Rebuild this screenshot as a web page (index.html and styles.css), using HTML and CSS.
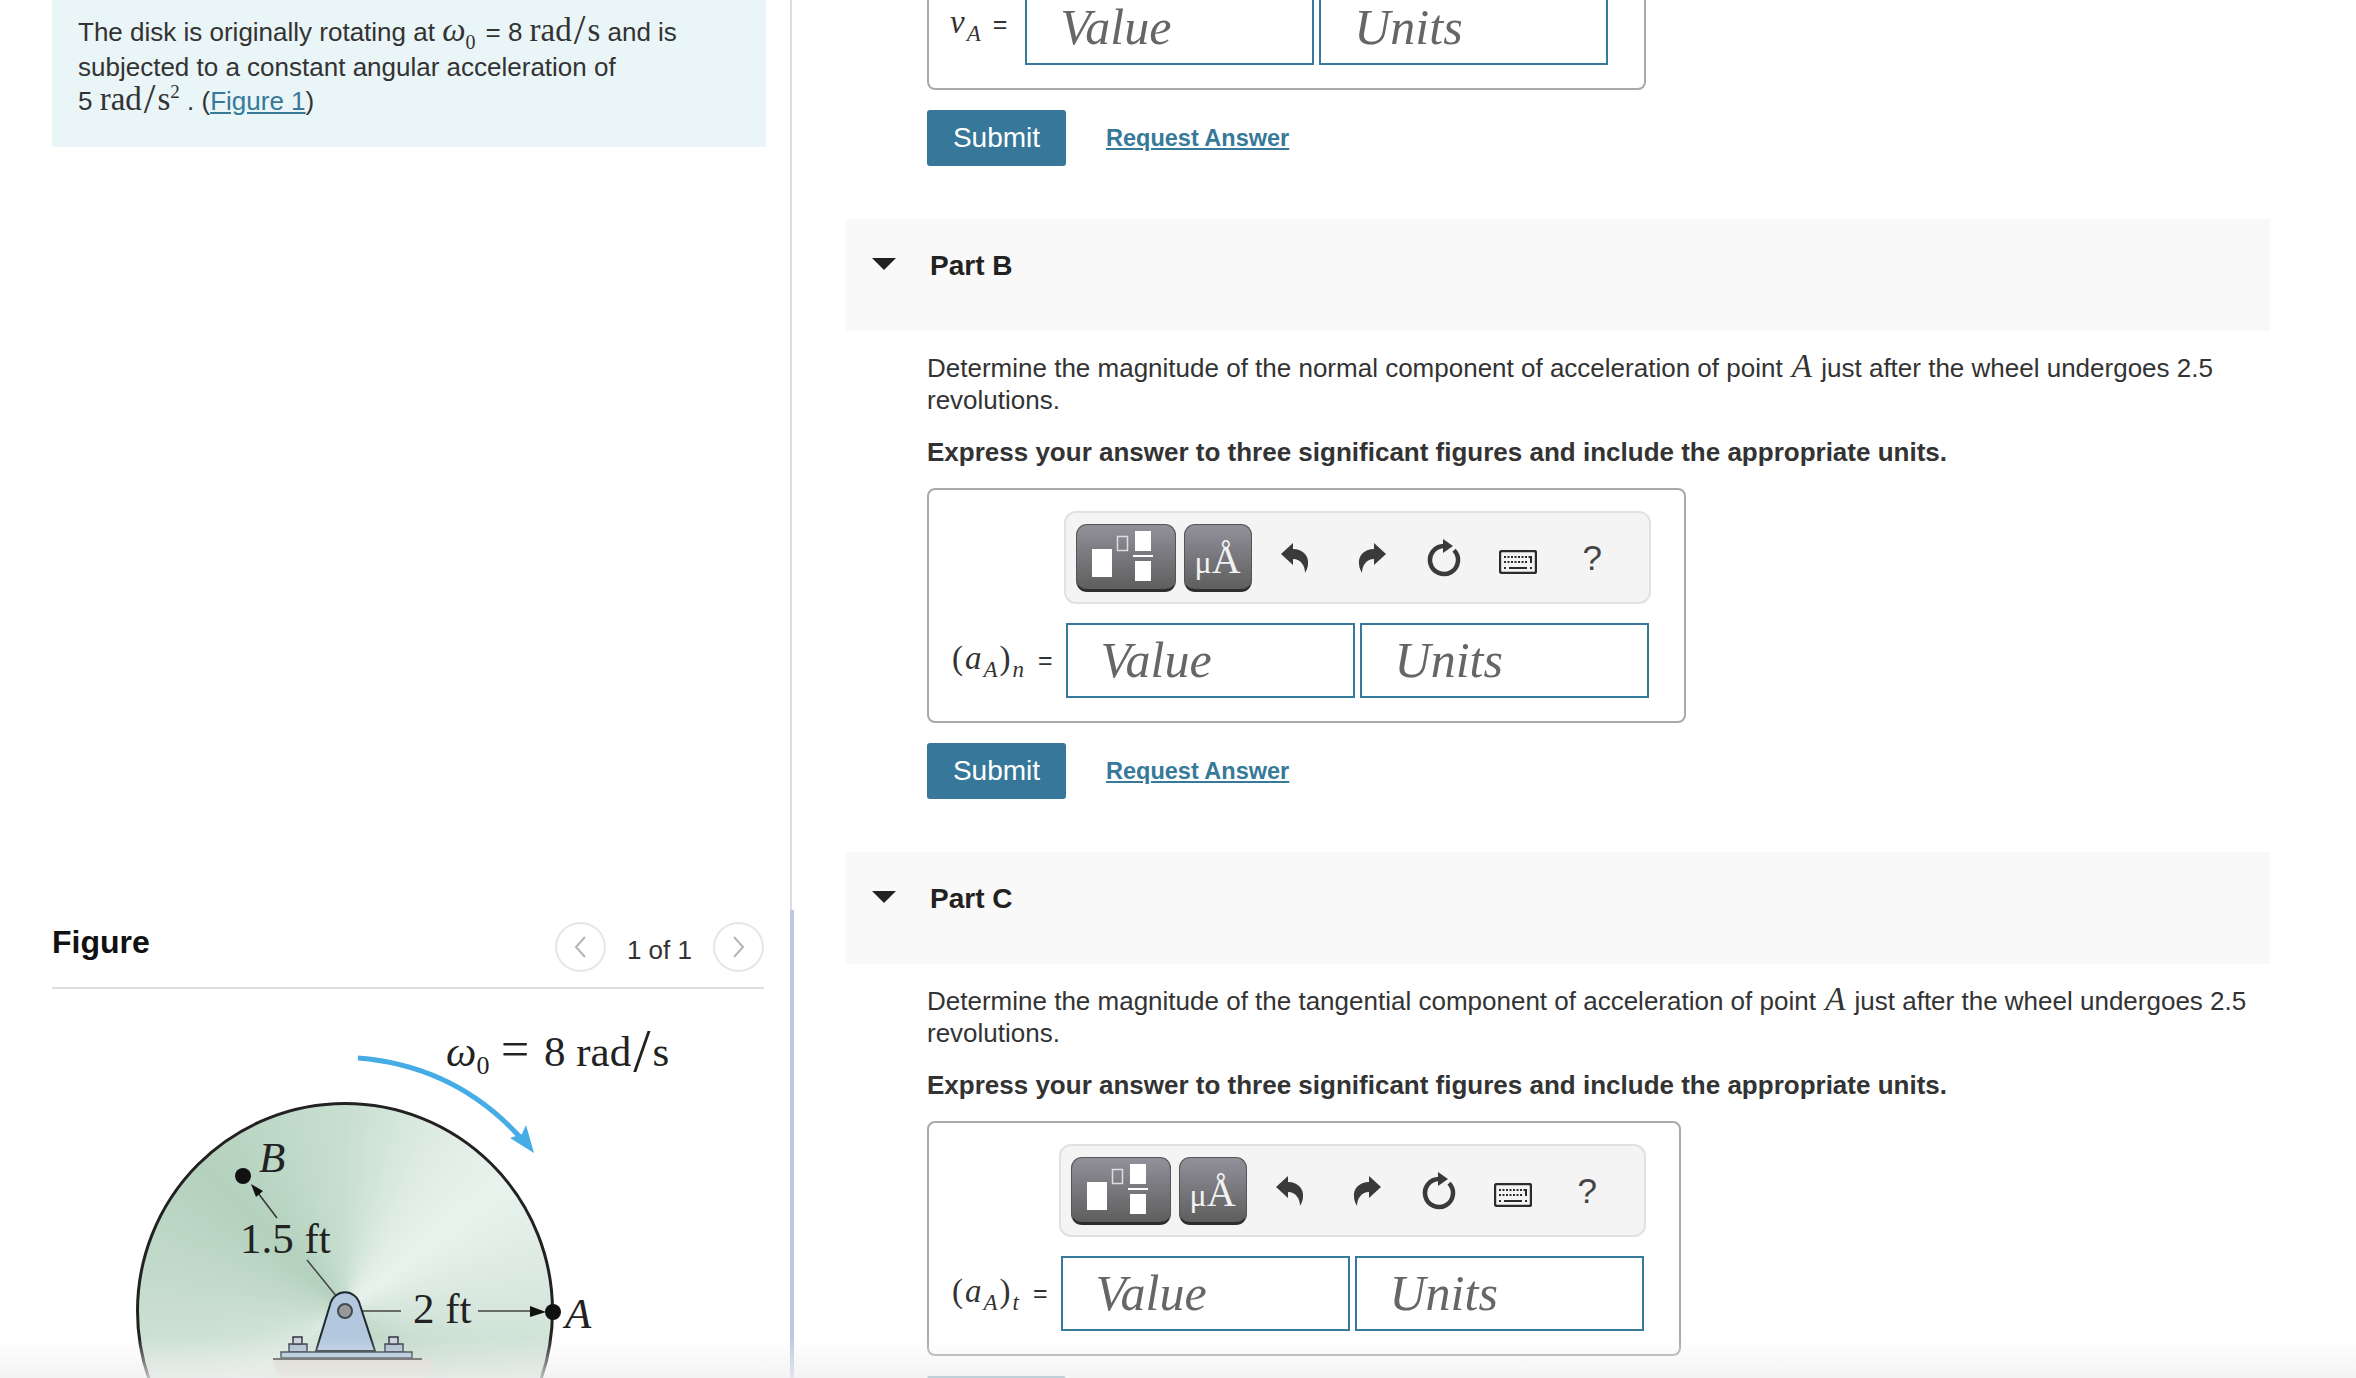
FILE: index.html
```html
<!DOCTYPE html>
<html>
<head>
    <title>Disk problem</title>
    <link rel="stylesheet" href="styles.css">
</head>
<body>
    <svg class="defs">
        <symbol id="undo" viewBox="0 0 28 30"><path d="M0 11 L12 0 V6 C22 6 28 13 27 21 C27 25 25 28 24 30 C24 23 20 16 12 16 V22 Z"/></symbol>
        <symbol id="redo" viewBox="0 0 28 30"><path d="M28 11 L16 0 V6 C6 6 0 13 1 21 C1 25 3 28 4 30 C4 23 8 16 16 16 V22 Z"/></symbol>
        <symbol id="reload" viewBox="0 0 40 40"><path d="M30 12.2 A14 14 0 1 1 20 8" fill="none" stroke="#3a3a3a" stroke-width="4.5"/><path d="M19 1 L29 8 L19 15 Z"/></symbol>
        <symbol id="keyboard" viewBox="0 0 38 24">
            <rect x="1" y="1" width="36" height="22" rx="2" fill="none" stroke="#2b2b2b" stroke-width="2.4"/>
            <path d="M5 7 H33 M5 12 H29 M5 18 H7 M31 18 H33" stroke="#2b2b2b" stroke-width="2" stroke-dasharray="2 1.5" fill="none"/>
            <path d="M10 18 H28 M32 6 V13" stroke="#2b2b2b" stroke-width="2"/>
        </symbol>
        <symbol id="templates" viewBox="0 0 100 68">
            <rect x="16" y="26" width="20" height="28" fill="#fff"/>
            <rect x="41.5" y="13.5" width="10" height="14" fill="none" stroke="#ddd" stroke-width="1.5"/>
            <rect x="59" y="8" width="16" height="20" fill="#fff"/>
            <rect x="57" y="32" width="20" height="2" fill="#fff"/>
            <rect x="59" y="38" width="16" height="20" fill="#fff"/>
        </symbol>
    </svg>

    <div class="page">
        <div class="left">
            <div class="intro">
                The disk is originally rotating at <span class="math"><i>ω</i><sub>0</sub></span><span class="eq">=</span> 8 <span class="math">rad<span class="slash">/</span>s</span> and is<br>
                subjected to a constant angular acceleration of<br>
                5 <span class="math">rad<span class="slash">/</span>s<sup>2</sup></span> . (<a href="#">Figure 1</a>)
            </div>

            <div class="figure-head">
                <h2>Figure</h2>
                <div class="pager">
                    <span class="round"><svg width="14" height="24" viewBox="0 0 14 24"><path d="M12 2 L3 12 L12 22" fill="none" stroke="#b4b4b4" stroke-width="2"/></svg></span>
                    <span class="count">1 of 1</span>
                    <span class="round"><svg width="14" height="24" viewBox="0 0 14 24"><path d="M2 2 L11 12 L2 22" fill="none" stroke="#b4b4b4" stroke-width="2"/></svg></span>
                </div>
            </div>

            <div class="figure">
                <div class="disk"></div>
                <svg class="drawing" viewBox="52 989 712 389" width="712" height="389">
                    <path d="M273 1360 H434 Q424 1402 352 1402 Q282 1402 273 1360 Z" fill="#d6d4c6"/>

                    <path d="M358 1058 Q460 1066 527 1145" fill="none" stroke="#45ace6" stroke-width="5"/>
                    <path d="M534 1153 L510 1138 L522 1134 L526 1125 Z" fill="#45ace6"/>

                    <text class="fig-text" x="446" y="1066"><tspan font-style="italic">ω</tspan><tspan font-size="26" dy="8">0</tspan></text>
                    <text class="fig-text fig-eq" x="501" y="1066">=</text>
                    <text class="fig-text" x="544" y="1066">8 rad<tspan class="fig-slash" dy="5" dx="2">/</tspan><tspan dy="-5" dx="2">s</tspan></text>
                    <text class="fig-text" x="259" y="1172" font-style="italic">B</text>
                    <text class="fig-text" x="240" y="1253">1.5 ft</text>
                    <text class="fig-text" x="413" y="1323">2 ft</text>
                    <text class="fig-text" x="565" y="1328" font-style="italic">A</text>

                    <circle cx="243" cy="1176" r="8" fill="#111"/>
                    <circle cx="553" cy="1312" r="8" fill="#111"/>
                    <path d="M277 1218 L255 1189" stroke="#333" stroke-width="1.5"/>
                    <path d="M251 1184 L263 1191 L256 1197 Z" fill="#111"/>
                    <path d="M307 1260 L337 1297" stroke="#444" stroke-width="1.5"/>
                    <path d="M360 1311 H401" stroke="#444" stroke-width="1.5"/>
                    <path d="M478 1311 H532" stroke="#444" stroke-width="1.5"/>
                    <path d="M530 1306 L546 1312 L530 1317 Z" fill="#111"/>

                    <path d="M316 1351 L330 1305 C334 1288 356 1288 360 1305 L375 1351 Z" fill="#b3c8df" stroke="#1f2a30" stroke-width="2"/>
                    <circle cx="345" cy="1311" r="7" fill="#999" stroke="#3f4a50" stroke-width="2"/>
                    <rect x="289" y="1344" width="18" height="8" fill="#a9bdcf" stroke="#334" stroke-width="1.5"/>
                    <rect x="293" y="1337" width="9" height="7" fill="#c9d2da" stroke="#334" stroke-width="1.5"/>
                    <rect x="385" y="1344" width="18" height="8" fill="#a9bdcf" stroke="#334" stroke-width="1.5"/>
                    <rect x="389" y="1337" width="9" height="7" fill="#c9d2da" stroke="#334" stroke-width="1.5"/>
                    <rect x="281" y="1352" width="131" height="6" fill="#a9c1da" stroke="#1f2a30" stroke-width="1.5"/>
                    <path d="M273 1359 H422" stroke="#333" stroke-width="2"/>
                </svg>
            </div>
        </div>

        <div class="right">
            <div class="answer answer-top">
                <div class="label"><span class="math"><i>v</i><sub><i>A</i></sub></span> =</div>
                <div class="inputs">
                    <div class="field">Value</div>
                    <div class="field">Units</div>
                </div>
            </div>
            <div class="actions">
                <button class="submit">Submit</button>
                <a class="request" href="#">Request Answer</a>
            </div>

            <div class="part-head"><span class="caret"></span>Part B</div>
            <div class="part-body">
                <p>Determine the magnitude of the normal component of acceleration of point <span class="math"><i>A</i></span> just after the wheel undergoes 2.5<br>revolutions.</p>
                <p class="express">Express your answer to three significant figures and include the appropriate units.</p>
                <div class="answer">
                    <div class="toolbar">
                        <span class="tool tool-wide"><svg width="100" height="68"><use href="#templates"/></svg></span>
                        <span class="tool tool-unit"><span class="mu">μ</span>Å</span>
                        <svg class="ico ico-undo"><use href="#undo"/></svg>
                        <svg class="ico ico-redo"><use href="#redo"/></svg>
                        <svg class="ico-reload"><use href="#reload"/></svg>
                        <svg class="ico-keys"><use href="#keyboard"/></svg>
                        <span class="help">?</span>
                    </div>
                    <div class="label"><span class="math">(<i>a</i><sub><i>A</i></sub>)<sub><i>n</i></sub></span> =</div>
                    <div class="inputs">
                        <div class="field">Value</div>
                        <div class="field">Units</div>
                    </div>
                </div>
            </div>
            <div class="actions">
                <button class="submit">Submit</button>
                <a class="request" href="#">Request Answer</a>
            </div>

            <div class="part-head"><span class="caret"></span>Part C</div>
            <div class="part-body">
                <p>Determine the magnitude of the tangential component of acceleration of point <span class="math"><i>A</i></span> just after the wheel undergoes 2.5<br>revolutions.</p>
                <p class="express">Express your answer to three significant figures and include the appropriate units.</p>
                <div class="answer">
                    <div class="toolbar">
                        <span class="tool tool-wide"><svg width="100" height="68"><use href="#templates"/></svg></span>
                        <span class="tool tool-unit"><span class="mu">μ</span>Å</span>
                        <svg class="ico ico-undo"><use href="#undo"/></svg>
                        <svg class="ico ico-redo"><use href="#redo"/></svg>
                        <svg class="ico-reload"><use href="#reload"/></svg>
                        <svg class="ico-keys"><use href="#keyboard"/></svg>
                        <span class="help">?</span>
                    </div>
                    <div class="label"><span class="math">(<i>a</i><sub><i>A</i></sub>)<sub><i>t</i></sub></span> =</div>
                    <div class="inputs">
                        <div class="field">Value</div>
                        <div class="field">Units</div>
                    </div>
                </div>
            </div>
            <div class="actions">
                <button class="submit"></button>
            </div>
        </div>
    </div>

    <div class="thumb"></div>
    <div class="fade"></div>
</body>
</html>
```

FILE: styles.css
```css
html, body {
    margin: 0;
    height: 1378px;
    overflow: hidden;
    background: #fff;
}

body {
    position: relative;
    font-family: "Liberation Sans", Arial, sans-serif;
    font-size: 26px;
    color: #333;
}

.defs {
    position: absolute;
    width: 0;
    height: 0;
}

.page {
    display: flex;
    height: 1378px;
}

.left {
    width: 792px;
    flex: none;
    box-sizing: border-box;
    padding-left: 52px;
    border-right: 2px solid #d9dde5;
}

.right {
    margin-left: 54px;
    width: 1424px;
    flex: none;
}

.math {
    font-family: "Liberation Serif", serif;
    font-size: 33px;
    line-height: 0;
}

.math sub {
    font-size: 20px;
    line-height: 0;
}

.math sup {
    font-size: 19px;
    line-height: 0;
}

.slash {
    font-size: 42px;
    line-height: 0;
    vertical-align: -3px;
    margin: 0 2px;
}

.eq {
    margin-left: 10px;
}

a {
    color: #377999;
}

/* left column */
.intro {
    width: 714px;
    height: 147px;
    box-sizing: border-box;
    padding: 15px 26px 0;
    background: #e9f5f7;
    line-height: 34.5px;
}

.figure-head {
    width: 712px;
    height: 67px;
    margin-top: 773px;
    display: flex;
    justify-content: space-between;
    border-bottom: 2px solid #dddddd;
}

.figure-head h2 {
    margin: 0;
    font-size: 32px;
    line-height: 44px;
    color: #111;
}

.pager {
    display: flex;
    align-items: center;
    height: 54px;
}

.count {
    margin: 6px 21px 0 21px;
}

.round {
    width: 51px;
    height: 50px;
    box-sizing: border-box;
    border: 2px solid #e6e6e6;
    border-radius: 50%;
    display: flex;
    align-items: center;
    justify-content: center;
}

.figure {
    position: relative;
    width: 712px;
    height: 389px;
    overflow: hidden;
}

.disk {
    position: absolute;
    left: 84px;
    top: 113px;
    width: 418px;
    height: 418px;
    box-sizing: border-box;
    border: 3px solid #222;
    border-radius: 50%;
    background: conic-gradient(from 0deg at 50% 49.5%,
        #c8dfd0 0deg, #dfece4 28deg, #e9f3ee 52deg, #d9e8df 85deg, #c6dccd 120deg,
        #bcd6c5 160deg, #c6dccd 200deg, #dbe9e0 235deg, #c6dccd 275deg,
        #b3d1bd 315deg, #c8dfd0 360deg);
}

.drawing {
    position: absolute;
    left: 0;
    top: 0;
}

.fig-text {
    font-family: "Liberation Serif", serif;
    font-size: 43px;
    fill: #222;
}

.fig-eq {
    font-size: 50px;
}

.fig-slash {
    font-size: 62px;
}

/* right column */
.answer {
    display: inline-grid;
    grid-template-columns: auto auto;
    column-gap: 11px;
    row-gap: 19px;
    align-items: center;
    box-sizing: border-box;
    padding: 21px 33px 23px 21px;
    border: 2px solid #a9a9a9;
    border-radius: 8px;
    vertical-align: top;
}

.answer-top {
    display: inline-flex;
    margin-left: 81px;
    height: 90px;
    padding-top: 0;
    padding-right: 36px;
    column-gap: 16px;
    border-top: 0;
    border-radius: 0 0 8px 8px;
    align-items: flex-start;
}

.answer-top .inputs {
    height: 65px;
}

.answer-top .label {
    padding-top: 10px;
}

.answer-top .field {
    height: 65px;
    border-top: 0;
    padding-bottom: 10px;
}

.label {
    white-space: nowrap;
    font-size: 25px;
    word-spacing: 3px;
}

.label .math {
    font-size: 33px;
    letter-spacing: 2px;
}

.label .math sub {
    font-size: 23px;
}

.toolbar {
    grid-column: 2;
    width: 587px;
    height: 93px;
    box-sizing: border-box;
    display: flex;
    align-items: center;
    padding-left: 10px;
    background: #f4f4f4;
    border: 2px solid #e1e1e1;
    border-radius: 12px;
}

.tool {
    height: 68px;
    box-sizing: border-box;
    background: linear-gradient(#92909a, #5e5e5e);
    border: 1px solid #555;
    border-bottom: 3px solid #2d2d2d;
    border-radius: 11px;
    display: flex;
    align-items: center;
    justify-content: center;
}

.tool-wide {
    width: 100px;
}

.tool-wide svg {
    flex: none;
}

.tool-unit {
    width: 68px;
    margin-left: 8px;
    font-family: "Liberation Serif", serif;
    font-size: 40px;
    color: #f2f2f2;
    padding-top: 6px;
}

.mu {
    font-size: 32px;
    margin-top: 6px;
}

.ico {
    width: 28px;
    height: 30px;
    fill: #3a3a3a;
}

.ico-undo {
    margin-left: 29px;
}

.ico-redo {
    margin-left: 49px;
}

.ico-reload {
    width: 40px;
    height: 40px;
    margin-left: 38px;
    fill: #3a3a3a;
}

.ico-keys {
    width: 38px;
    height: 24px;
    margin: 8px 0 0 35px;
}

.help {
    margin-left: 46px;
    font-size: 35px;
    color: #444;
}

.inputs {
    display: flex;
    gap: 5px;
    margin-left: 2px;
}

.field {
    width: 289px;
    height: 75px;
    box-sizing: border-box;
    border: 2px solid #377999;
    padding: 0 0 2px 33px;
    display: flex;
    align-items: center;
    font-family: "Liberation Serif", serif;
    font-style: italic;
    font-size: 50px;
    color: #666;
}

.actions {
    display: flex;
    align-items: center;
    margin: 20px 0 0 81px;
}

.submit {
    width: 139px;
    height: 56px;
    padding: 0;
    border: 0;
    border-radius: 3px;
    background: #37789a;
    color: #fff;
    font-family: inherit;
    font-size: 28px;
}

.request {
    margin-left: 40px;
    font-size: 23.5px;
    font-weight: bold;
}

.part-head {
    height: 112px;
    box-sizing: border-box;
    margin-top: 53px;
    padding: 0 0 18px 26px;
    background: #f9f9f9;
    display: flex;
    align-items: center;
    font-size: 28px;
    font-weight: bold;
    color: #222;
}

.caret {
    width: 0;
    height: 0;
    margin: -5px 34px 0 0;
    border-left: 12px solid transparent;
    border-right: 12px solid transparent;
    border-top: 12px solid #222;
}

.part-body {
    padding: 21px 0 0 81px;
}

.part-body p {
    margin: 0;
    line-height: 32px;
}

.part-body .express {
    margin: 20px 0 20px;
    font-weight: bold;
}

.part-body .math {
    font-size: 33px;
    margin: 0 2px;
}

/* overlays */
.thumb {
    position: absolute;
    left: 790px;
    top: 910px;
    width: 4px;
    height: 468px;
    background: #bccadf;
}

.fade {
    position: absolute;
    left: 0;
    right: 0;
    bottom: 0;
    height: 40px;
    background: linear-gradient(rgba(240, 240, 240, 0), rgba(240, 240, 240, 0.75));
}
```
